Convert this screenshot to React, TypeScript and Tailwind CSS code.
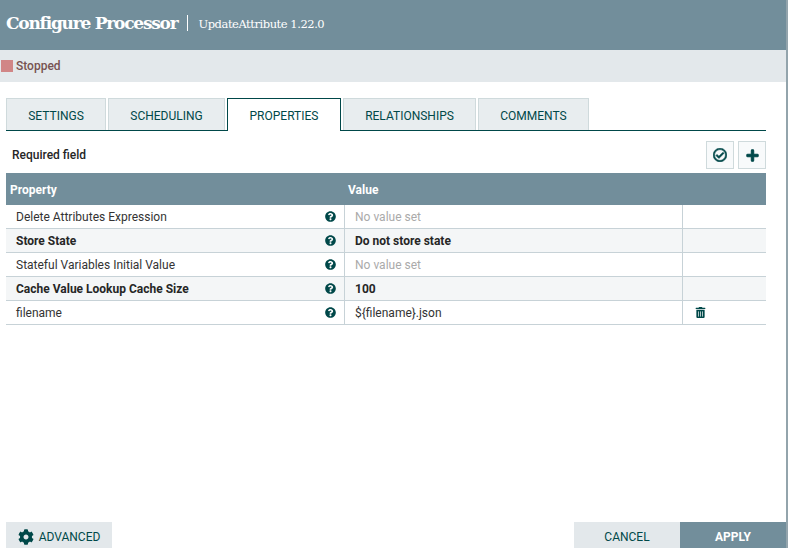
import React from "react";
import { FaCog, FaPlus, FaQuestionCircle, FaRegCheckCircle, FaTrashAlt } from "react-icons/fa";

const tabs = [
  { label: "SETTINGS", width: "w-[100px]" },
  { label: "SCHEDULING", width: "w-[117px]" },
  { label: "PROPERTIES", width: "w-[114px]", active: true },
  { label: "RELATIONSHIPS", width: "w-[133px]" },
  { label: "COMMENTS", width: "w-[111px]" },
];

const rows = [
  { name: "Delete Attributes Expression", value: "No value set", empty: true },
  { name: "Store State", value: "Do not store state", bold: true },
  { name: "Stateful Variables Initial Value", value: "No value set", empty: true },
  { name: "Cache Value Lookup Cache Size", value: "100", bold: true },
  { name: "filename", value: "${filename}.json", removable: true },
];

export default function App() {
  return (
    <div className="flex h-[548px] w-[788px] overflow-hidden bg-white font-['Roboto',sans-serif]">
      <div className="flex w-[786px] flex-col">
        {/* Header */}
        <div className="flex h-[50px] items-center bg-[#728e9b] pl-[6px] pb-[4px] text-white">
          <span className="font-['DejaVu_Serif',serif] text-[17px] font-bold leading-none tracking-[-1.22px]">Configure Processor</span>
          <span className="ml-[10px] h-4 w-px bg-white" />
          <span className="ml-[10px] mt-[3px] font-['DejaVu_Serif',serif] text-[11.5px] leading-none tracking-[-0.45px]">UpdateAttribute 1.22.0</span>
        </div>

        {/* Status */}
        <div className="flex h-8 items-center gap-[3px] bg-[#e3e8eb] pl-px">
          <span className="h-3 w-3 bg-[#d18686]" />
          <span className="text-xs font-medium text-[#775351]">Stopped</span>
        </div>

        <div className="flex flex-1 flex-col px-[6px] pt-4">
          {/* Tabs */}
          <div className="flex h-[33px] w-[760px] gap-[2px] border-b border-[#004849]">
            {tabs.map((tab) => (
              <div
                key={tab.label}
                className={
                  tab.active
                    ? `${tab.width} -mb-px flex items-center justify-center border border-b-0 border-[#004849] bg-white pt-[2px] text-xs text-[#004849]`
                    : `${tab.width} flex items-center justify-center border border-b-0 border-[#cfdadc] bg-[#e8edef] pt-[2px] text-xs text-[#004849]`
                }
              >
                {tab.label}
              </div>
            ))}
          </div>

          {/* Toolbar */}
          <div className="flex h-[42px] w-[760px] items-center justify-between pt-[6px] pl-[6px]">
            <span className="text-xs font-medium text-[#262626]">Required field</span>
            <div className="flex gap-1">
              <div className="flex h-7 w-7 items-center justify-center border border-[#cfdadc] bg-[#f8fafb] text-[#004849]">
                <FaRegCheckCircle size={14} stroke="currentColor" strokeWidth={24} />
              </div>
              <div className="flex h-7 w-7 items-center justify-center border border-[#cfdadc] bg-[#f8fafb] text-[#004849]">
                <FaPlus size={13} stroke="currentColor" strokeWidth={40} />
              </div>
            </div>
          </div>

          {/* Table */}
          <div className="w-[760px]">
            <div className="flex h-8 items-center bg-[#728e9b] pt-px text-xs font-bold text-white">
              <span className="w-[342px] pl-1">Property</span>
              <span>Value</span>
            </div>
            {rows.map((row, i) => (
              <div
                key={row.name}
                className={`flex h-6 border-b border-[#c7d2d7] text-xs text-[#262626] ${i % 2 === 1 ? "bg-[#f4f6f7]" : "bg-white"}`}
              >
                <div className="flex w-[339px] items-center justify-between border-r border-[#c7d2d7] pl-[10px] pr-2">
                  <span className={row.bold ? "font-bold" : "text-[#333333]"}>{row.name}</span>
                  <FaQuestionCircle size={11} className="text-[#004849]" />
                </div>
                <div className="flex w-[338px] items-center border-r border-[#c7d2d7] pl-[10px]">
                  <span
                    className={
                      row.empty ? "text-[#aaaaaa]" : row.bold ? "font-bold" : "text-[#333333]"
                    }
                  >
                    {row.value}
                  </span>
                </div>
                <div className="flex flex-1 items-center pl-3">
                  {row.removable && <FaTrashAlt size={11} className="text-[#004849]" />}
                </div>
              </div>
            ))}
          </div>

          {/* Footer */}
          <div className="mt-auto flex items-end justify-between">
            <div className="flex h-[26px] w-[106px] items-center justify-center gap-[5px] bg-[#e3e8eb] pt-[4px] text-xs text-[#004849]">
              <FaCog size={16} />
              <span>ADVANCED</span>
            </div>
            <div className="-mr-[6px] flex">
              <div className="flex h-[26px] w-[106px] items-center justify-center bg-[#e3e8eb] pt-[4px] text-xs text-[#004849]">
                CANCEL
              </div>
              <div className="flex h-[26px] w-[106px] items-center justify-center bg-[#728e9b] pt-[4px] text-xs font-bold text-white">
                APPLY
              </div>
            </div>
          </div>
        </div>
      </div>
      <div className="flex-1 bg-[#93a4ac]" />
    </div>
  );
}
